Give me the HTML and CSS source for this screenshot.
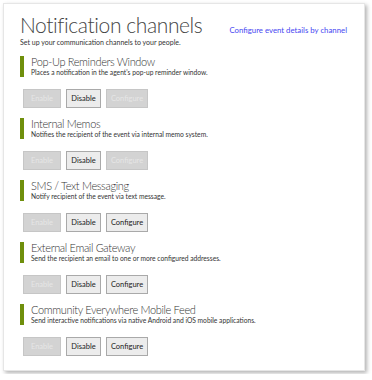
FILE: index.html
```html
<!DOCTYPE html>
<html lang="en">
<head>
    <meta charset="UTF-8">
    <meta name="viewport" content="width=device-width, initial-scale=1.0">
    <title>Notification channels</title>
    <link rel="stylesheet" href="styles.css">
</head>
<body>

    <div class="panel">
        <div class="header">
            <h1 class="title">Notification channels</h1>
            <a class="config-link" href="#">Configure event details by channel</a>
        </div>
        <p class="subtitle">Set up your communication channels to your people.</p>

        <div class="channel">
            <div class="channel-head">
                <h2>Pop-Up Reminders Window</h2>
                <p>Places a notification in the agent's pop-up reminder window.</p>
            </div>
            <div class="actions">
                <button class="btn enable" disabled>Enable</button>
                <button class="btn disable">Disable</button>
                <button class="btn configure" disabled>Configure</button>
            </div>
        </div>

        <div class="channel">
            <div class="channel-head">
                <h2>Internal Memos</h2>
                <p>Notifies the recipient of the event via internal memo system.</p>
            </div>
            <div class="actions">
                <button class="btn enable" disabled>Enable</button>
                <button class="btn disable">Disable</button>
                <button class="btn configure" disabled>Configure</button>
            </div>
        </div>

        <div class="channel">
            <div class="channel-head">
                <h2>SMS / Text Messaging</h2>
                <p>Notify recipient of the event via text message.</p>
            </div>
            <div class="actions">
                <button class="btn enable" disabled>Enable</button>
                <button class="btn disable">Disable</button>
                <button class="btn configure">Configure</button>
            </div>
        </div>

        <div class="channel">
            <div class="channel-head">
                <h2>External Email Gateway</h2>
                <p>Send the recipient an email to one or more configured addresses.</p>
            </div>
            <div class="actions">
                <button class="btn enable" disabled>Enable</button>
                <button class="btn disable">Disable</button>
                <button class="btn configure">Configure</button>
            </div>
        </div>

        <div class="channel">
            <div class="channel-head">
                <h2>Community Everywhere Mobile Feed</h2>
                <p>Send interactive notifications via native Android and iOS mobile applications.</p>
            </div>
            <div class="actions">
                <button class="btn enable" disabled>Enable</button>
                <button class="btn disable">Disable</button>
                <button class="btn configure">Configure</button>
            </div>
        </div>
    </div>

</body>
</html>
```

FILE: styles.css
```css
* {
    margin: 0;
    padding: 0;
    box-sizing: border-box;
}

body {
    font-family: 'Lato', 'Open Sans', sans-serif;
    background-color: #ffffff;
    color: #333333;
}

.panel {
    margin: 3px;
    width: 362px;
    height: 368px;
    padding: 8px 16px 0 16px;
    background: #ffffff;
    border: 1px solid #e6e6e6;
    box-shadow: 2px 2px 4px rgba(0, 0, 0, 0.3);
}

.header {
    display: flex;
    justify-content: space-between;
    align-items: baseline;
    white-space: nowrap;
}

.title {
    font-size: 21px;
    font-weight: 300;
    line-height: 26px;
    letter-spacing: -0.4px;
    color: #444444;
}

.config-link {
    font-size: 7.8px;
    color: #4646f2;
    text-decoration: none;
    margin-right: 1px;
}

.subtitle {
    font-size: 7px;
    line-height: 9px;
    color: #333333;
    white-space: nowrap;
}

/* Baris channel */
.channel {
    margin-top: 9px;
}

.channel + .channel {
    margin-top: 10px;
}

.channel-head {
    border-left: 4px solid #6f8f0c;
    padding-left: 7px;
    height: 21px;
    white-space: nowrap;
}

.channel-head h2 {
    font-size: 11px;
    font-weight: 300;
    line-height: 12px;
    letter-spacing: -0.35px;
    color: #333333;
}

.channel-head p {
    font-size: 6.7px;
    line-height: 9px;
    color: #333333;
}

.actions {
    display: flex;
    gap: 5px;
    margin-top: 12px;
    padding-left: 3px;
}

.btn {
    height: 19px;
    font-family: inherit;
    font-size: 7.5px;
    color: #222222;
    background: #ececec;
    border: 1px solid #a9a9a9;
    cursor: pointer;
}

.btn.enable { width: 38px; }
.btn.disable { width: 35px; }
.btn.configure { width: 42px; }

.btn:disabled {
    color: #e6e6e6;
    background: #d3d3d3;
    border-color: #c6c6c6;
    cursor: default;
}
```
